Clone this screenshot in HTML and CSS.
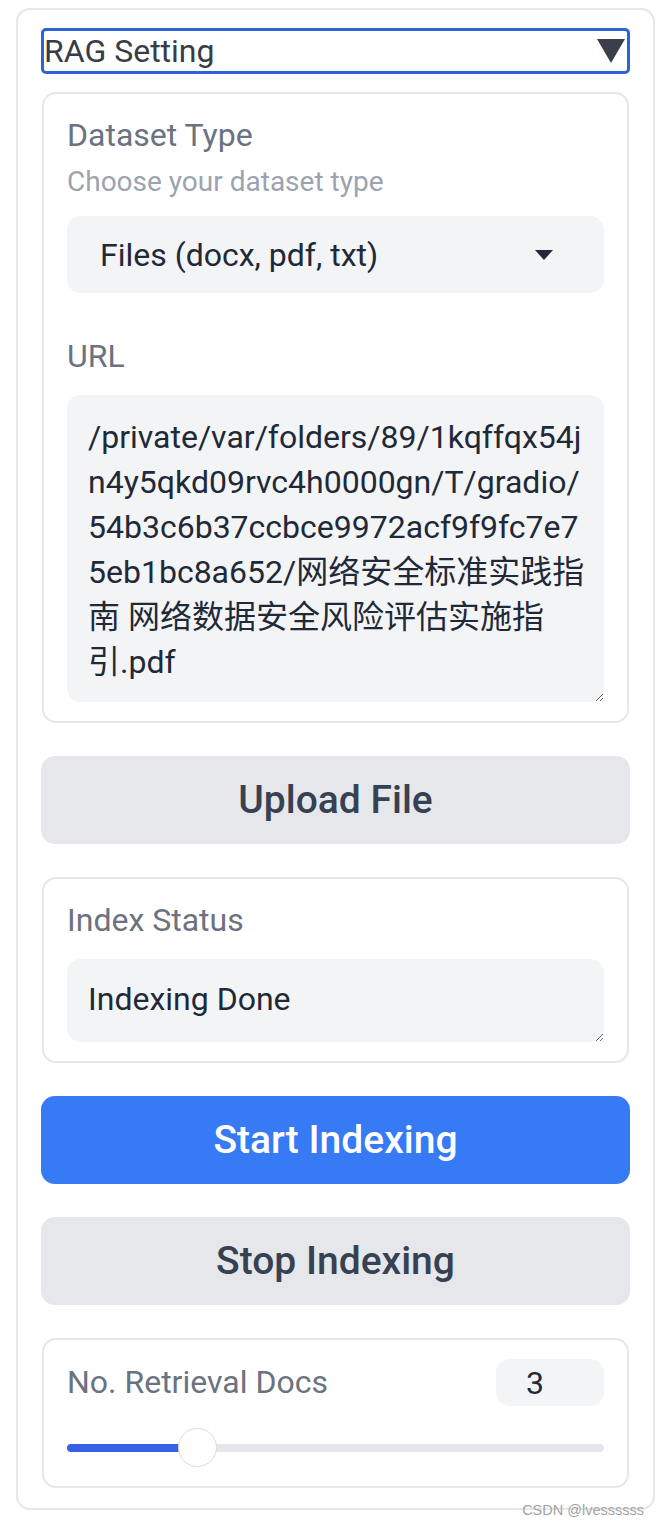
FILE: index.html
```html
<!DOCTYPE html>
<html lang="en">
<head>
    <meta charset="UTF-8">
    <meta name="viewport" content="width=device-width, initial-scale=1.0">
    <title>RAG Setting</title>
    <link rel="stylesheet" href="styles.css">
</head>
<body>
    <details class="accordion" open>
        <summary class="accordion-head">
            <span>RAG Setting</span>
            <svg class="accordion-icon" width="28" height="24" viewBox="0 0 28 24"><polygon points="0,0 28,0 14,24" /></svg>
        </summary>

        <div class="stack">
            <div class="block">
                <label class="label">Dataset Type</label>
                <div class="info">Choose your dataset type</div>
                <div class="dropdown">
                    <span>Files (docx, pdf, txt)</span>
                    <svg width="18" height="10" viewBox="0 0 18 10"><polygon points="0,0 18,0 9,10" /></svg>
                </div>
                <label class="label label-gap" for="url">URL</label>
                <textarea id="url" class="textbox textbox-url" wrap="off" readonly>/private/var/folders/89/1kqffqx54j
n4y5qkd09rvc4h0000gn/T/gradio/
54b3c6b37ccbce9972acf9f9fc7e7
5eb1bc8a652/网络安全标准实践指
南 网络数据安全风险评估实施指
引.pdf</textarea>
            </div>

            <button class="btn btn-secondary">Upload File</button>

            <div class="block">
                <label class="label label-gap" for="status">Index Status</label>
                <textarea id="status" class="textbox textbox-status" readonly>Indexing Done</textarea>
            </div>

            <button class="btn btn-primary">Start Indexing</button>
            <button class="btn btn-secondary">Stop Indexing</button>

            <div class="block">
                <div class="slider-head">
                    <label class="label" for="docs">No. Retrieval Docs</label>
                    <input class="number" type="number" value="3" min="1" max="10">
                </div>
                <input id="docs" class="slider" type="range" min="1" max="10" step="1" value="3">
            </div>
        </div>
    </details>

    <div class="watermark">CSDN @lvessssss</div>
</body>
</html>
```

FILE: styles.css
```css
/* sidebar: rag settings accordion */
body {
    margin: 0;
    font-family: Roboto, "Noto Sans CJK SC", sans-serif;
    background-color: #ffffff;
    position: relative;
    min-height: 1526px;
}
.accordion {
    margin: 8px 0 0 16px;
    width: 639px;
    box-sizing: border-box;
    border: 2px solid #e5e7eb;
    border-radius: 14px;
    padding: 18px 23px 20px 23px;
}
.accordion-head {
    list-style: none;
    display: flex;
    justify-content: space-between;
    align-items: center;
    height: 46px;
    box-sizing: border-box;
    border: 3px solid #2f62d6;
    border-radius: 5px;
    padding: 0 2px 0 0;
    font-size: 32px;
    color: #383c47;
    cursor: pointer;
}
.accordion-head::-webkit-details-marker { display: none; }
.accordion-icon { fill: #3a3f4b; }

.stack {
    display: flex;
    flex-direction: column;
    gap: 33px;
    margin-top: 18px;
}
.block {
    margin: 0 1px;
    border: 2px solid #e5e7eb;
    border-radius: 14px;
    padding: 19px 23px 19px 23px;
    display: flex;
    flex-direction: column;
}
.label {
    font-size: 32px;
    line-height: 45px;
    color: #6b7280;
}
.label-gap { margin-bottom: 16px; }
.dropdown + .label-gap { margin-top: 41px; }
.info {
    margin-top: 4px;
    font-size: 28px;
    line-height: 40px;
    color: #9ca3af;
}
.dropdown {
    margin-top: 14px;
    height: 77px;
    box-sizing: border-box;
    padding: 0 51px 0 33px;
    display: flex;
    justify-content: space-between;
    align-items: center;
    background-color: #f3f4f6;
    border-radius: 14px;
    font-size: 32px;
    color: #1f2937;
}
.dropdown svg { fill: #1f2937; }

.textbox {
    display: block;
    width: 100%;
    box-sizing: border-box;
    border: none;
    outline: none;
    border-radius: 14px;
    background-color: #f3f4f6;
    font-family: Roboto, "Noto Sans CJK SC", sans-serif;
    font-size: 32px;
    line-height: 45px;
    color: #1f2937;
    padding: 20px 21px 17px 21px;
    overflow: hidden;
    resize: vertical;
    margin: 0;
}
.textbox-url { height: 307px; }
.textbox-status { height: 83px; padding-top: 18px; }

.btn {
    height: 88px;
    border: none;
    border-radius: 14px;
    font-family: Roboto, sans-serif;
    font-size: 39px;
    font-weight: 500;
    cursor: pointer;
}
.btn-secondary { background-color: #e5e7eb; color: #374151; }
.btn-primary { background-color: #367af5; color: #ffffff; }

.slider-head {
    display: flex;
    justify-content: space-between;
    align-items: center;
}
.number {
    width: 108px;
    height: 47px;
    box-sizing: border-box;
    border: none;
    outline: none;
    border-radius: 14px;
    background-color: #f3f4f6;
    padding: 0 0 0 30px;
    font-family: Roboto, sans-serif;
    font-size: 32px;
    color: #1f2937;
    -moz-appearance: textfield;
}
.number::-webkit-inner-spin-button,
.number::-webkit-outer-spin-button { -webkit-appearance: none; margin: 0; }

.slider {
    -webkit-appearance: none;
    appearance: none;
    width: 100%;
    height: 39px;
    margin: 22px 0 0 0;
    background: transparent;
}
.slider::-webkit-slider-runnable-track {
    height: 8px;
    border-radius: 4px;
    background: linear-gradient(to right, #3763e3 24.3%, #e5e7eb 24.3%);
}
.slider::-webkit-slider-thumb {
    -webkit-appearance: none;
    width: 39px;
    height: 39px;
    margin-top: -15.5px;
    border-radius: 50%;
    background: #ffffff;
    border: 1px solid #dcdcdc;
    box-sizing: border-box;
}

.watermark {
    position: absolute;
    right: 16px;
    top: 1502px;
    font-family: "Liberation Sans", sans-serif;
    font-size: 14.5px;
    color: #a3a3a3;
}
```
